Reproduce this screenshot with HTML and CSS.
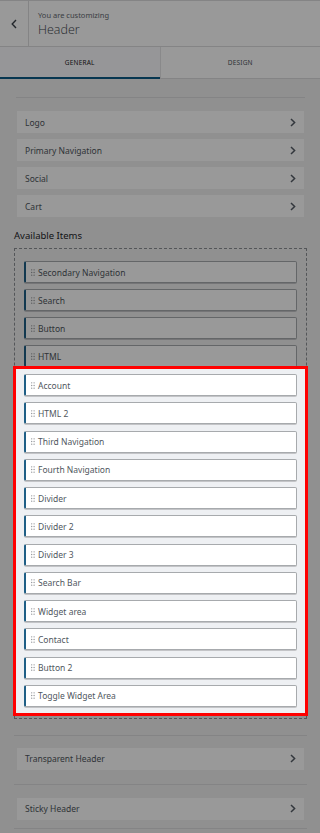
FILE: index.html
```html
<!DOCTYPE html>
<html>
<head>
<meta charset="utf-8">
<link rel="stylesheet" href="styles.css">
</head>
<body>
<div class="header">
  <div class="back">
    <svg width="6" height="10" viewBox="0 0 6 10"><path d="M5 1 L1.2 5 L5 9" fill="none" stroke="#3c434a" stroke-width="1.4"/></svg>
  </div>
  <div class="title">
    <span class="sub">You are customizing</span>
    <span class="name">Header</span>
  </div>
</div>
<div class="tabs">
  <div class="tab active">GENERAL</div>
  <div class="tab">DESIGN</div>
</div>
<div class="content">
  <div class="sep first"></div>
  <div class="rows">
    <div class="row">Logo<svg class="chev" width="6" height="9" viewBox="0 0 6 9"><path d="M1 1 L4.6 4.5 L1 8" fill="none" stroke="#555d66" stroke-width="1.5"/></svg></div>
    <div class="row">Primary Navigation<svg class="chev" width="6" height="9" viewBox="0 0 6 9"><path d="M1 1 L4.6 4.5 L1 8" fill="none" stroke="#555d66" stroke-width="1.5"/></svg></div>
    <div class="row">Social<svg class="chev" width="6" height="9" viewBox="0 0 6 9"><path d="M1 1 L4.6 4.5 L1 8" fill="none" stroke="#555d66" stroke-width="1.5"/></svg></div>
    <div class="row">Cart<svg class="chev" width="6" height="9" viewBox="0 0 6 9"><path d="M1 1 L4.6 4.5 L1 8" fill="none" stroke="#555d66" stroke-width="1.5"/></svg></div>
  </div>
  <h3 class="avail">Available Items</h3>
  <div class="pool">
    <div class="item"><svg class="grip" width="4" height="7" viewBox="0 0 4 7"><g fill="#8c8f94"><circle cx="0.7" cy="0.8" r="0.65"/><circle cx="3.1" cy="0.8" r="0.65"/><circle cx="0.7" cy="3.5" r="0.65"/><circle cx="3.1" cy="3.5" r="0.65"/><circle cx="0.7" cy="6.2" r="0.65"/><circle cx="3.1" cy="6.2" r="0.65"/></g></svg>Secondary Navigation</div>
    <div class="item"><svg class="grip" width="4" height="7" viewBox="0 0 4 7"><g fill="#8c8f94"><circle cx="0.7" cy="0.8" r="0.65"/><circle cx="3.1" cy="0.8" r="0.65"/><circle cx="0.7" cy="3.5" r="0.65"/><circle cx="3.1" cy="3.5" r="0.65"/><circle cx="0.7" cy="6.2" r="0.65"/><circle cx="3.1" cy="6.2" r="0.65"/></g></svg>Search</div>
    <div class="item"><svg class="grip" width="4" height="7" viewBox="0 0 4 7"><g fill="#8c8f94"><circle cx="0.7" cy="0.8" r="0.65"/><circle cx="3.1" cy="0.8" r="0.65"/><circle cx="0.7" cy="3.5" r="0.65"/><circle cx="3.1" cy="3.5" r="0.65"/><circle cx="0.7" cy="6.2" r="0.65"/><circle cx="3.1" cy="6.2" r="0.65"/></g></svg>Button</div>
    <div class="item"><svg class="grip" width="4" height="7" viewBox="0 0 4 7"><g fill="#8c8f94"><circle cx="0.7" cy="0.8" r="0.65"/><circle cx="3.1" cy="0.8" r="0.65"/><circle cx="0.7" cy="3.5" r="0.65"/><circle cx="3.1" cy="3.5" r="0.65"/><circle cx="0.7" cy="6.2" r="0.65"/><circle cx="3.1" cy="6.2" r="0.65"/></g></svg>HTML</div>
    <div class="highlight">
      <div class="item"><svg class="grip" width="4" height="7" viewBox="0 0 4 7"><g fill="#8c8f94"><circle cx="0.7" cy="0.8" r="0.65"/><circle cx="3.1" cy="0.8" r="0.65"/><circle cx="0.7" cy="3.5" r="0.65"/><circle cx="3.1" cy="3.5" r="0.65"/><circle cx="0.7" cy="6.2" r="0.65"/><circle cx="3.1" cy="6.2" r="0.65"/></g></svg>Account</div>
      <div class="item"><svg class="grip" width="4" height="7" viewBox="0 0 4 7"><g fill="#8c8f94"><circle cx="0.7" cy="0.8" r="0.65"/><circle cx="3.1" cy="0.8" r="0.65"/><circle cx="0.7" cy="3.5" r="0.65"/><circle cx="3.1" cy="3.5" r="0.65"/><circle cx="0.7" cy="6.2" r="0.65"/><circle cx="3.1" cy="6.2" r="0.65"/></g></svg>HTML 2</div>
      <div class="item"><svg class="grip" width="4" height="7" viewBox="0 0 4 7"><g fill="#8c8f94"><circle cx="0.7" cy="0.8" r="0.65"/><circle cx="3.1" cy="0.8" r="0.65"/><circle cx="0.7" cy="3.5" r="0.65"/><circle cx="3.1" cy="3.5" r="0.65"/><circle cx="0.7" cy="6.2" r="0.65"/><circle cx="3.1" cy="6.2" r="0.65"/></g></svg>Third Navigation</div>
      <div class="item"><svg class="grip" width="4" height="7" viewBox="0 0 4 7"><g fill="#8c8f94"><circle cx="0.7" cy="0.8" r="0.65"/><circle cx="3.1" cy="0.8" r="0.65"/><circle cx="0.7" cy="3.5" r="0.65"/><circle cx="3.1" cy="3.5" r="0.65"/><circle cx="0.7" cy="6.2" r="0.65"/><circle cx="3.1" cy="6.2" r="0.65"/></g></svg>Fourth Navigation</div>
      <div class="item"><svg class="grip" width="4" height="7" viewBox="0 0 4 7"><g fill="#8c8f94"><circle cx="0.7" cy="0.8" r="0.65"/><circle cx="3.1" cy="0.8" r="0.65"/><circle cx="0.7" cy="3.5" r="0.65"/><circle cx="3.1" cy="3.5" r="0.65"/><circle cx="0.7" cy="6.2" r="0.65"/><circle cx="3.1" cy="6.2" r="0.65"/></g></svg>Divider</div>
      <div class="item"><svg class="grip" width="4" height="7" viewBox="0 0 4 7"><g fill="#8c8f94"><circle cx="0.7" cy="0.8" r="0.65"/><circle cx="3.1" cy="0.8" r="0.65"/><circle cx="0.7" cy="3.5" r="0.65"/><circle cx="3.1" cy="3.5" r="0.65"/><circle cx="0.7" cy="6.2" r="0.65"/><circle cx="3.1" cy="6.2" r="0.65"/></g></svg>Divider 2</div>
      <div class="item"><svg class="grip" width="4" height="7" viewBox="0 0 4 7"><g fill="#8c8f94"><circle cx="0.7" cy="0.8" r="0.65"/><circle cx="3.1" cy="0.8" r="0.65"/><circle cx="0.7" cy="3.5" r="0.65"/><circle cx="3.1" cy="3.5" r="0.65"/><circle cx="0.7" cy="6.2" r="0.65"/><circle cx="3.1" cy="6.2" r="0.65"/></g></svg>Divider 3</div>
      <div class="item"><svg class="grip" width="4" height="7" viewBox="0 0 4 7"><g fill="#8c8f94"><circle cx="0.7" cy="0.8" r="0.65"/><circle cx="3.1" cy="0.8" r="0.65"/><circle cx="0.7" cy="3.5" r="0.65"/><circle cx="3.1" cy="3.5" r="0.65"/><circle cx="0.7" cy="6.2" r="0.65"/><circle cx="3.1" cy="6.2" r="0.65"/></g></svg>Search Bar</div>
      <div class="item"><svg class="grip" width="4" height="7" viewBox="0 0 4 7"><g fill="#8c8f94"><circle cx="0.7" cy="0.8" r="0.65"/><circle cx="3.1" cy="0.8" r="0.65"/><circle cx="0.7" cy="3.5" r="0.65"/><circle cx="3.1" cy="3.5" r="0.65"/><circle cx="0.7" cy="6.2" r="0.65"/><circle cx="3.1" cy="6.2" r="0.65"/></g></svg>Widget area</div>
      <div class="item"><svg class="grip" width="4" height="7" viewBox="0 0 4 7"><g fill="#8c8f94"><circle cx="0.7" cy="0.8" r="0.65"/><circle cx="3.1" cy="0.8" r="0.65"/><circle cx="0.7" cy="3.5" r="0.65"/><circle cx="3.1" cy="3.5" r="0.65"/><circle cx="0.7" cy="6.2" r="0.65"/><circle cx="3.1" cy="6.2" r="0.65"/></g></svg>Contact</div>
      <div class="item"><svg class="grip" width="4" height="7" viewBox="0 0 4 7"><g fill="#8c8f94"><circle cx="0.7" cy="0.8" r="0.65"/><circle cx="3.1" cy="0.8" r="0.65"/><circle cx="0.7" cy="3.5" r="0.65"/><circle cx="3.1" cy="3.5" r="0.65"/><circle cx="0.7" cy="6.2" r="0.65"/><circle cx="3.1" cy="6.2" r="0.65"/></g></svg>Button 2</div>
      <div class="item"><svg class="grip" width="4" height="7" viewBox="0 0 4 7"><g fill="#8c8f94"><circle cx="0.7" cy="0.8" r="0.65"/><circle cx="3.1" cy="0.8" r="0.65"/><circle cx="0.7" cy="3.5" r="0.65"/><circle cx="3.1" cy="3.5" r="0.65"/><circle cx="0.7" cy="6.2" r="0.65"/><circle cx="3.1" cy="6.2" r="0.65"/></g></svg>Toggle Widget Area</div>
    </div>
  </div>
  <div class="sep s2"></div>
  <div class="row single r1">Transparent Header<svg class="chev" width="6" height="9" viewBox="0 0 6 9"><path d="M1 1 L4.6 4.5 L1 8" fill="none" stroke="#555d66" stroke-width="1.5"/></svg></div>
  <div class="sep s3"></div>
  <div class="row single r2">Sticky Header<svg class="chev" width="6" height="9" viewBox="0 0 6 9"><path d="M1 1 L4.6 4.5 L1 8" fill="none" stroke="#555d66" stroke-width="1.5"/></svg></div>
  <div class="sep s4"></div>
</div>
</body>
</html>
```
FILE: styles.css
```css
html, body {
  margin: 0;
  padding: 0;
}
body {
  width: 320px;
  height: 833px;
  overflow: hidden;
  background: #f0f0f1;
  font-family: "Noto Sans", "Open Sans", sans-serif;
  color: #50575e;
}
.header {
  display: flex;
  height: 45px;
  background: #fff;
  border-top: 1px solid #dcdcde;
  border-bottom: 1px solid #dcdcde;
}
.back {
  width: 28px;
  border-right: 1px solid #dcdcde;
  display: flex;
  align-items: center;
  justify-content: center;
}
.title {
  display: flex;
  flex-direction: column;
  padding: 9px 0 0 9px;
}
.sub {
  font-size: 7.5px;
  line-height: 10px;
  color: #646970;
}
.name {
  font-family: "Open Sans", "Noto Sans", sans-serif;
  font-weight: 300;
  font-size: 12.5px;
  line-height: 16px;
  margin-top: 2px;
  color: #3c434a;
}
.tabs {
  display: flex;
  height: 32px;
}
.tab {
  flex: 1;
  display: flex;
  align-items: center;
  justify-content: center;
  font-size: 6.5px;
  letter-spacing: 0.2px;
  color: #50575e;
  background: #fff;
  border-bottom: 1px solid #dcdcde;
  border-left: 1px solid #e4e4e7;
}
.tab.active {
  background: #fbfbfd;
  color: #1d2327;
  border-left: none;
  border-bottom: 2px solid #0b5a85;
  height: 30px;
}
.content {
  padding: 0 13px 0 14px;
}
.sep {
  height: 1px;
  background: #dcdcde;
  margin: 0 2px;
}
.sep.first {
  margin-top: 18px;
}
.rows {
  display: flex;
  flex-direction: column;
  gap: 6px;
  margin: 13px 3px 0;
}
.row {
  height: 22px;
  background: #fff;
  display: flex;
  align-items: center;
  justify-content: space-between;
  padding: 0 8px 0 8px;
  font-size: 8.5px;
  color: #50575e;
}
.row.single {
  margin: 0 3px;
}
.avail {
  margin: 12px 0 5px 0;
  font-size: 9.5px;
  line-height: 14px;
  font-weight: normal;
  color: #1d2327;
}
.pool {
  border: 1px dashed #8c8f94;
  padding: 12px 9px 5px;
}
.item {
  height: 22px;
  box-sizing: border-box;
  background: #fff;
  border: 1px solid #a7aaad;
  border-left: 2px solid #1f5f86;
  border-radius: 2px;
  box-shadow: 0 1px 0 #c3c4c7;
  display: flex;
  align-items: center;
  padding-left: 5px;
  font-size: 8.5px;
  color: #50575e;
}
.item + .item {
  margin-top: 6px;
}
.highlight .item + .item {
  margin-top: 6.27px;
}
.grip {
  margin-right: 3px;
  flex: none;
}
.highlight {
  position: relative;
  z-index: 1;
  margin: 2px -8px 0 -8px;
  padding: 5px 8px 6px 8px;
  background: #eef0f3;
  outline: 3px solid #ff0000;
  box-shadow: 0 0 0 2000px rgba(0, 0, 0, 0.4);
}
.sep.s2 {
  margin-top: 16px;
  margin-left: 0;
  margin-right: 0;
}
.r1 {
  margin-top: 12px !important;
}
.sep.s3 {
  margin-top: 14px;
  margin-left: 0;
  margin-right: 0;
}
.r2 {
  margin-top: 13px !important;
}
.sep.s4 {
  margin-top: 8px;
  margin-left: 0;
  margin-right: 0;
}
```
